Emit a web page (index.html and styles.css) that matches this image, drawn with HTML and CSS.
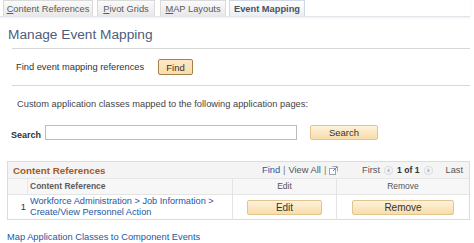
FILE: index.html
```html
<!DOCTYPE html>
<html>
<head>
<meta charset="utf-8">
<link rel="stylesheet" href="styles.css">
</head>
<body>
<div class="tabs">
  <div class="tab t1"><u>C</u>ontent References</div>
  <div class="tab t2"><u>P</u>ivot Grids</div>
  <div class="tab t3"><u>M</u>AP Layouts</div>
  <div class="tab t4 active">Event Mapping</div>
</div>
<h1 class="title">Manage Event Mapping</h1>
<div class="sep"></div>
<div class="find-row">
  <span class="find-label">Find event mapping references</span>
  <button class="btn btn-find">Find</button>
</div>
<div class="sep"></div>
<div class="intro">Custom application classes mapped to the following application pages:</div>
<div class="search-row">
  <label class="search-label">Search</label>
  <input class="search-input" type="text">
  <button class="btn btn-search">Search</button>
</div>
<div class="grid">
  <div class="grid-head">
    <span class="grid-title">Content References</span>
    <span class="grid-nav">
      <span class="lnk">Find</span><span class="bar">|</span><span class="plain">View All</span><span class="bar">|</span>
      <svg class="popout" width="9" height="9" viewBox="0 0 9 9"><rect x="0.5" y="2.5" width="6" height="6" fill="#fff" stroke="#9aa6b6"/><path d="M3.5 0.5h5v5" fill="none" stroke="#9aa6b6"/><path d="M8 1L4 5" stroke="#6f82a0"/></svg>
    </span>
    <span class="pager">
      <span class="plain">First</span>
      <svg class="arrow" width="9" height="9" viewBox="0 0 10 10"><circle cx="5" cy="5" r="4.5" fill="#f1f2f4" stroke="#d6d9de"/><path d="M6 2.5L3.5 5 6 7.5z" fill="#a9b0ba"/></svg>
      <b class="count">1 of 1</b>
      <svg class="arrow" width="9" height="9" viewBox="0 0 10 10"><circle cx="5" cy="5" r="4.5" fill="#f1f2f4" stroke="#d6d9de"/><path d="M4 2.5L6.5 5 4 7.5z" fill="#a9b0ba"/></svg>
      <span class="plain last">Last</span>
    </span>
  </div>
  <div class="row colhead">
    <div class="c-num"></div>
    <div class="c-ref">Content Reference</div>
    <div class="c-edit">Edit</div>
    <div class="c-rem">Remove</div>
  </div>
  <div class="row data">
    <div class="c-num">1</div>
    <div class="c-ref"><span class="lnk">Workforce Administration &gt; Job Information &gt;<br>Create/View Personnel Action</span></div>
    <div class="c-edit"><button class="btn btn-edit">Edit</button></div>
    <div class="c-rem"><button class="btn btn-rem">Remove</button></div>
  </div>
</div>
<div class="footer-link">Map Application Classes to Component Events</div>
</body>
</html>
```
FILE: styles.css
```css
html, body {
  margin: 0;
  padding: 0;
  background: #fff;
}
body {
  font-family: "Liberation Sans", Arial, sans-serif;
  font-size: 9.3px;
  color: #333;
  width: 474px;
  height: 243px;
  overflow: hidden;
  white-space: nowrap;
}
.tabs {
  display: flex;
  gap: 4px;
  padding-left: 3px;
  height: 16px;
  border-bottom: 1px solid #e2e4e8;
  box-shadow: 0 1px 2px #eceef1;
  margin-right: 4px;
}
.tab {
  height: 16px;
  line-height: 16px;
  box-sizing: border-box;
  color: #5a5a5a;
  background: linear-gradient(#fbfbfb, #e8e8e8);
  border: 1px solid #dadada;
  border-bottom: none;
  text-align: center;
}
.t1 { width: 90px; }
.t2 { width: 58px; }
.t3 { width: 66px; margin-left: 1px; }
.t4 { width: 76px; margin-left: -1px; }
.tab.active {
  font-weight: bold;
  color: #4a5360;
  background: linear-gradient(#ffffff, #e9eef5);
  border-color: #d0d8e3;
}
.title {
  margin: 8px 0 0 8px;
  font-size: 13.7px;
  font-weight: normal;
  color: #4d5d7c;
  height: 19px;
  line-height: 19px;
}
.sep {
  height: 1px;
  background: #d8d8d8;
  margin: 4px 4px 0 12px;
}
.find-row + .sep { margin-top: 0; }
.find-row {
  display: flex;
  align-items: center;
  height: 36px;
  padding-left: 16px;
}
.find-label {
  width: 142px;
  color: #333;
}
.btn {
  font-family: "Liberation Sans", Arial, sans-serif;
  font-size: 9.5px;
  color: #333;
  background: linear-gradient(#fdf2dc, #f9dcaa);
  border: 1px solid #e2c48f;
  border-radius: 2px;
  padding: 0;
  height: 15px;
  line-height: 13px;
  text-align: center;
}
.btn-find {
  width: 35px;
  height: 16px;
  border-color: #a4804a;
  background: linear-gradient(#fde8c4, #f9dcaa);
}
.intro {
  padding-left: 17px;
  margin-top: 12px;
  height: 13px;
  line-height: 13px;
  color: #444;
}
.search-row {
  display: flex;
  align-items: center;
  margin-top: 13px;
  height: 16px;
}
.search-label {
  margin-left: 11px;
  width: 34px;
  font-weight: bold;
  font-size: 9px;
  color: #333;
  margin-top: 6px;
}
.search-input {
  width: 252px;
  height: 15px;
  box-sizing: border-box;
  border: 1px solid #bcbcbc;
  margin: 0;
  padding: 0;
}
.btn-search {
  margin-left: 13px;
  width: 68px;
  height: 15px;
}
.grid {
  margin: 21px 4px 0 7px;
  border: 1px solid #dcdcdc;
  height: 59px;
  box-sizing: border-box;
}
.grid-head {
  display: flex;
  align-items: center;
  height: 16px;
  background: #f4f4f4;
  border-bottom: 1px solid #e6e6e6;
}
.grid-title {
  font-weight: bold;
  color: #a55a1f;
  font-size: 9.8px;
  padding-left: 5px;
  width: 249px;
}
.grid-nav {
  display: flex;
  align-items: center;
  width: 100px;
}
.lnk { color: #2457a4; }
.plain { color: #555; }
.bar { color: #777; margin: 0 3px; }
.pager {
  display: flex;
  align-items: center;
  gap: 4px;
  color: #555;
}
.count { color: #333; font-size: 8.6px; }
.last { margin-left: 9px; }
.row {
  display: flex;
}
.colhead {
  height: 15px;
  line-height: 15px;
  font-size: 8.5px;
  font-weight: bold;
  color: #5c5c5c;
  background: #f7f7f7;
  border-bottom: 1px solid #e4e4e4;
}
.colhead .c-edit, .colhead .c-rem { font-weight: normal; color: #555; }
.c-num { width: 20px; box-sizing: border-box; text-align: right; padding-right: 2px; border-right: 1px solid #e8e8e8; }
.c-ref { width: 205px; box-sizing: border-box; padding-left: 2px; border-right: 1px solid #e4e4e4; }
.c-edit { width: 104px; box-sizing: border-box; text-align: center; border-right: 1px solid #e4e4e4; }
.c-rem { flex: 1; text-align: center; }
.data {
  height: 25px;
  align-items: stretch;
}
.data .c-num { border-right: none; }
.data .c-ref { line-height: 11px; padding-top: 1px; font-size: 9.2px; }
.data .c-num { padding-top: 7px; color: #333; }
.data .c-edit, .data .c-rem { display: flex; align-items: center; justify-content: center; }
.btn-edit { width: 75px; height: 15px; font-size: 10px; }
.btn-rem { width: 102px; height: 15px; font-size: 10px; }
.footer-link {
  margin: 12px 0 0 7px;
  color: #2457a4;
  font-size: 9.3px;
}
```
